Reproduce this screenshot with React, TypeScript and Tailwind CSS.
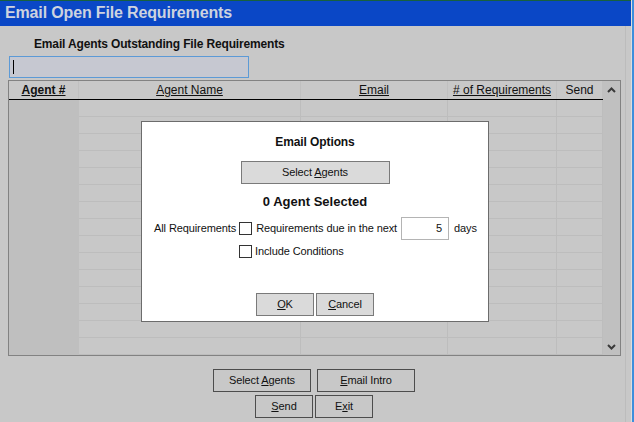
import React from "react";

function Btn({
  children,
  className,
}: {
  children: React.ReactNode;
  className: string;
}) {
  return (
    <div
      className={
        "flex items-center justify-center h-[23px] border text-[11px] leading-[13px] text-[#111] tracking-[-0.1px] " +
        className
      }
    >
      {children}
    </div>
  );
}

function Check() {
  return <div className="w-[13px] h-[13px] border border-[#333] bg-white shrink-0" />;
}

export default function App() {
  const rows = Array.from({ length: 15 });
  return (
    <div className="w-[634px] h-[422px] bg-[#c8c8c8] flex overflow-hidden relative font-['Liberation_Sans',Arial,sans-serif] text-[#111]">
      <div className="w-[631px] flex flex-col">
        <div className="h-[26px] border-t border-[#17603f] bg-[#0a47c6] pl-[5px] text-[16px] font-bold leading-[24px] tracking-[-0.15px] text-[#cdd3df] whitespace-nowrap">
          Email Open File Requirements
        </div>
        <div className="flex flex-1">
          <div className="w-[625px] flex flex-col">
            <div className="pl-[34px] pt-[11px] text-[12px] font-bold leading-[14px] tracking-[-0.15px] whitespace-nowrap">
              Email Agents Outstanding File Requirements
            </div>
            <div className="ml-[9px] mt-[5px] w-[240px] h-[22px] border border-[#5c9ad6] bg-[#c6c8d1] pl-[3px] pt-[3px]">
              <div className="w-px h-[14px] bg-black" />
            </div>
            <div className="ml-[8px] mt-[2px] w-[613px] h-[276px] border border-[#828282] flex">
              <div className="w-[594px] flex flex-col">
                <div className="flex h-[19px] border-b border-black text-[12px] leading-[18px] whitespace-nowrap">
                  <div className="w-[70px] border-r border-[#c0c0c0] text-center font-bold">
                    <span className="underline">Agent #</span>
                  </div>
                  <div className="w-[222px] border-r border-[#c0c0c0] text-center">
                    <span className="underline">Agent Name</span>
                  </div>
                  <div className="w-[147px] border-r border-[#c0c0c0] text-center">
                    <span className="underline">Email</span>
                  </div>
                  <div className="w-[109px] border-r border-[#c0c0c0] text-center">
                    <span className="underline"># of Requirements</span>
                  </div>
                  <div className="w-[46px] border-r border-[#c0c0c0] text-center">Send</div>
                </div>
                {rows.map((_, i) => (
                  <div key={i} className="flex h-[17px]">
                    <div className="w-[70px] bg-[#bfbfbf]" />
                    <div className="w-[222px] border-r border-b border-[#bdbdbd]" />
                    <div className="w-[147px] border-r border-b border-[#bdbdbd]" />
                    <div className="w-[109px] border-r border-b border-[#bdbdbd]" />
                    <div className="w-[46px] border-r border-b border-[#bdbdbd]" />
                  </div>
                ))}
              </div>
              <div className="w-[17px] bg-[#c0c0c0] flex flex-col items-center justify-between">
                <svg width="9" height="6" viewBox="0 0 9 6" className="mt-[6px]">
                  <polyline points="1,5 4.5,1.5 8,5" fill="none" stroke="#3a3a3a" strokeWidth="2" />
                </svg>
                <svg width="9" height="6" viewBox="0 0 9 6" className="mb-[5px]">
                  <polyline points="1,1 4.5,4.5 8,1" fill="none" stroke="#3a3a3a" strokeWidth="2" />
                </svg>
              </div>
            </div>
            <div className="flex ml-[213px] mt-[13px] gap-[6px]">
              <Btn className="w-[98px] border-[#4d4d4d]">
                <span>
                  Select <span className="underline">A</span>gents
                </span>
              </Btn>
              <Btn className="w-[98px] border-[#4d4d4d]">
                <span>
                  <span className="underline">E</span>mail Intro
                </span>
              </Btn>
            </div>
            <div className="flex ml-[255px] mt-[3px] gap-[2px]">
              <Btn className="w-[58px] border-[#4d4d4d]">
                <span>
                  <span className="underline">S</span>end
                </span>
              </Btn>
              <Btn className="w-[58px] border-[#4d4d4d]">
                <span>
                  E<span className="underline">x</span>it
                </span>
              </Btn>
            </div>
          </div>
          <div className="w-px bg-[#bcbcbc]" />
          <div className="flex-1 bg-[#c8c8c8]" />
        </div>
      </div>
      <div className="w-px bg-[#dedede]" />
      <div className="w-[2px] bg-[#3d8fdc]" />

      <div className="absolute left-[141px] top-[121px] w-[348px] h-[201px] bg-white border border-[#6c6c6c] flex flex-col">
        <div className="pt-[13px] text-center text-[12px] font-bold leading-[14px] tracking-[-0.1px]">Email Options</div>
        <div className="flex justify-center mt-[12px]">
          <Btn className="w-[149px] bg-[#dadada] border-[#7a7a7a]">
            <span>
              Select <span className="underline">A</span>gents
            </span>
          </Btn>
        </div>
        <div className="mt-[10px] text-center text-[13px] font-bold leading-[16px]">0 Agent Selected</div>
        <div className="mt-[7px] pl-[12px] flex items-center h-[23px] text-[11px] leading-[13px] tracking-[-0.1px] whitespace-nowrap">
          <span>All Requirements</span>
          <div className="ml-[3px]">
            <Check />
          </div>
          <span className="ml-[4px]">Requirements due in the next</span>
          <div className="ml-[4px] w-[48px] h-[23px] border border-[#b4b4b4] bg-white flex items-center justify-end pr-[6px]">
            5
          </div>
          <span className="ml-[5px]">days</span>
        </div>
        <div className="mt-[5px] pl-[97px] flex items-center h-[13px] text-[11px] leading-[13px] tracking-[-0.1px] whitespace-nowrap">
          <Check />
          <span className="ml-[3px]">Include Conditions</span>
        </div>
        <div className="mt-auto mb-[5px] flex justify-center gap-[2px]">
          <Btn className="w-[58px] bg-[#dadada] border-[#7a7a7a]">
            <span>
              <span className="underline">O</span>K
            </span>
          </Btn>
          <Btn className="w-[58px] bg-[#dadada] border-[#7a7a7a]">
            <span>
              <span className="underline">C</span>ancel
            </span>
          </Btn>
        </div>
      </div>
    </div>
  );
}
